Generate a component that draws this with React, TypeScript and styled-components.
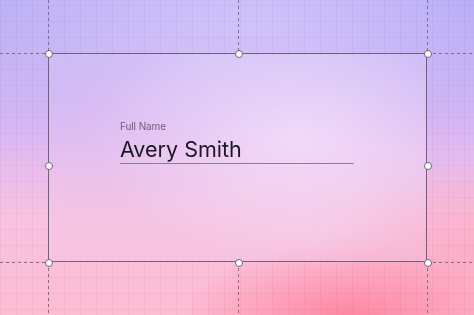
import React from 'react';
import styled, { createGlobalStyle } from 'styled-components';

const GlobalStyle = createGlobalStyle`
  html, body {
    margin: 0;
    padding: 0;
  }
  body {
    font-family: Inter, "Noto Sans", sans-serif;
  }
`;

const Canvas = styled.div`
  position: relative;
  width: 474px;
  height: 315px;
  overflow: hidden;
  box-sizing: border-box;
  padding: 53px 0 0 48px;
  background:
    radial-gradient(ellipse 170px 75px at 350px 318px, rgba(255, 120, 148, 0.8), rgba(255, 120, 148, 0) 100%),
    radial-gradient(ellipse 150px 90px at 474px 250px, rgba(255, 150, 170, 0.45), rgba(255, 150, 170, 0) 100%),
    radial-gradient(ellipse 260px 110px at 250px 25px, rgba(212, 200, 255, 0.65), rgba(212, 200, 255, 0) 100%),
    radial-gradient(ellipse 200px 150px at 474px 0px, rgba(176, 166, 248, 0.6), rgba(176, 166, 248, 0) 100%),
    radial-gradient(ellipse 180px 160px at 0px 0px, rgba(184, 174, 246, 0.6), rgba(184, 174, 246, 0) 100%),
    linear-gradient(180deg, #c2b5f4 0%, #dcb8f2 42%, #f9c2e0 70%, #fdbcd2 100%);
`;

const Grid = styled.div`
  position: absolute;
  inset: 0;
  pointer-events: none;
  background-image:
    linear-gradient(90deg, rgba(130, 90, 170, 0.075) 1px, transparent 1px),
    linear-gradient(180deg, rgba(130, 90, 170, 0.075) 1px, transparent 1px);
  background-size: 16px 16px;
  background-position: 0 5px;
`;

const Frame = styled.div`
  position: relative;
  z-index: 1;
  width: 379px;
  height: 209px;
  box-sizing: border-box;
  border: 1px solid #6c6379;
  padding: 66px 0 0 71px;
  backdrop-filter: blur(10px);
  background:
    radial-gradient(ellipse 210px 120px at 250px 85px, rgba(255, 240, 255, 0.55), rgba(255, 240, 255, 0) 100%),
    rgba(238, 218, 250, 0.18);
`;

const Field = styled.div`
  display: flex;
  flex-direction: column;
  width: 234px;
`;

const Label = styled.span`
  font-size: 10px;
  line-height: 12px;
  color: #6d5f78;
  letter-spacing: -0.1px;
`;

const Value = styled.span`
  margin-top: 4px;
  font-size: 21.5px;
  line-height: 26px;
  color: #1d1722;
  padding-bottom: 1px;
  border-bottom: 1px solid #8c7c93;
`;

const Guide = styled.div<{ $vertical?: boolean }>`
  position: absolute;
  z-index: 2;
  ${({ $vertical }) =>
    $vertical
      ? `width: 1px;
         background: repeating-linear-gradient(180deg, #7c6f88 0 3px, transparent 3px 6px);`
      : `height: 1px;
         background: repeating-linear-gradient(90deg, #7c6f88 0 3px, transparent 3px 6px);`}
`;

const Handle = styled.div`
  position: absolute;
  z-index: 3;
  width: 8px;
  height: 8px;
  box-sizing: border-box;
  border-radius: 50%;
  background: #ffffff;
  border: 1px solid #6f6479;
  transform: translate(-50%, -50%);
`;

const left = 48;
const right = 427;
const top = 53;
const bottom = 262;
const midX = 238;
const midY = 165;

const vGuides = [left, midX, right];
const hGuides = [top, bottom];

const handles: [number, number][] = [
  [left, top],
  [midX, top],
  [right, top],
  [left, midY],
  [right, midY],
  [left, bottom],
  [midX, bottom],
  [right, bottom],
];

export default function App() {
  return (
    <>
      <GlobalStyle />
      <Canvas>
        <Grid />
        {vGuides.map((x) => (
          <React.Fragment key={`v${x}`}>
            <Guide $vertical style={{ left: x, top: 0, height: top }} />
            <Guide $vertical style={{ left: x, top: bottom, height: 315 - bottom }} />
          </React.Fragment>
        ))}
        {hGuides.map((y) => (
          <React.Fragment key={`h${y}`}>
            <Guide style={{ top: y, left: 0, width: left }} />
            <Guide style={{ top: y, left: right, width: 474 - right }} />
          </React.Fragment>
        ))}
        <Frame>
          <Field>
            <Label>Full Name</Label>
            <Value>Avery Smith</Value>
          </Field>
        </Frame>
        {handles.map(([x, y]) => (
          <Handle key={`${x}-${y}`} style={{ left: x + 0.5, top: y + 0.5 }} />
        ))}
      </Canvas>
    </>
  );
}
